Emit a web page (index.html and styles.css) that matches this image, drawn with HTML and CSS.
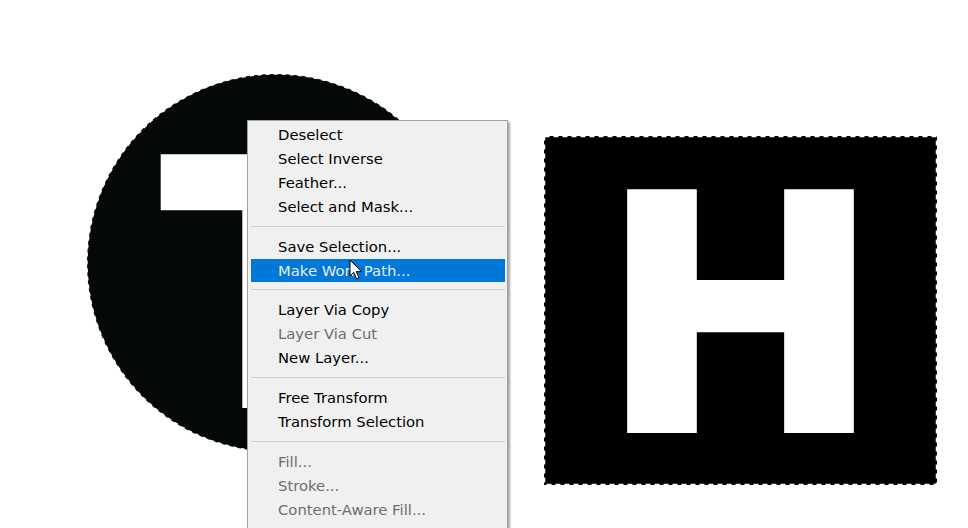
FILE: index.html
```html
<!DOCTYPE html>
<html>
<head>
<meta charset="utf-8">
<link rel="stylesheet" href="styles.css">
</head>
<body>
<div class="stage">
  <svg class="art" width="968" height="528" viewBox="0 0 968 528">
    <circle cx="276" cy="263" r="189" fill="#040806"/>
    <circle cx="276" cy="263" r="189" fill="none" stroke="#ffffff" stroke-width="1.5" stroke-dasharray="4 4"/>
    <text class="glyph glyph-t" x="278" y="404" font-size="337" text-anchor="middle">T</text>
    <rect x="544" y="136" width="393" height="349" fill="#000000"/>
    <rect x="544.5" y="136.5" width="392" height="348" fill="none" stroke="#ffffff" stroke-width="1.5" stroke-dasharray="5 4"/>
    <text class="glyph glyph-h" x="740.5" y="430" font-size="326" text-anchor="middle" transform="translate(740.5 0) scale(1.035 1) translate(-740.5 0)">H</text>
  </svg>

  <div class="menu">
    <div class="item">Deselect</div>
    <div class="item">Select Inverse</div>
    <div class="item">Feather...</div>
    <div class="item">Select and Mask...</div>
    <div class="sep"></div>
    <div class="item">Save Selection...</div>
    <div class="item active">Make Work Path...</div>
    <div class="sep"></div>
    <div class="item">Layer Via Copy</div>
    <div class="item disabled">Layer Via Cut</div>
    <div class="item">New Layer...</div>
    <div class="sep"></div>
    <div class="item">Free Transform</div>
    <div class="item">Transform Selection</div>
    <div class="sep"></div>
    <div class="item disabled">Fill...</div>
    <div class="item disabled">Stroke...</div>
    <div class="item disabled">Content-Aware Fill...</div>
    <div class="item disabled">Generative Fill...</div>
  </div>

  <svg class="cursor" width="14" height="22" viewBox="0 0 14 22">
    <path d="M1 1 L1 17 L4.8 13.4 L7.6 19.8 L10 18.8 L7.3 12.6 L12.4 12.6 Z" fill="#ffffff" stroke="#000000" stroke-width="1" stroke-linejoin="miter"/>
  </svg>
</div>
</body>
</html>
```

FILE: styles.css
```css
html, body {
  margin: 0;
  padding: 0;
  background: #ffffff;
}

.stage {
  position: relative;
  width: 968px;
  height: 528px;
  overflow: hidden;
  background: #ffffff;
}

.art {
  display: block;
}

.glyph {
  font-family: "DejaVu Sans", sans-serif;
  font-weight: bold;
  fill: #ffffff;
  stroke: #ffffff;
  stroke-linejoin: miter;
}

.glyph-h {
  stroke-width: 6px;
}

.glyph-t {
  stroke-width: 8px;
}

.menu {
  position: absolute;
  left: 247px;
  top: 120px;
  width: 254px;
  padding: 2px 2px 2px 3px;
  background: #f0f0f0;
  border: 1px solid #a0a0a0;
  box-shadow: 2px 2px 2px rgba(0, 0, 0, 0.35);
  font-family: "DejaVu Sans", sans-serif;
  font-size: 14.8px;
  color: #000000;
}

.item {
  height: 24px;
  line-height: 24px;
  padding-left: 27px;
  white-space: nowrap;
}

.item.active {
  background: #0078d7;
  color: #e8eef6;
  height: 23px;
  line-height: 23px;
  margin-bottom: 1px;
}

.item.disabled {
  color: #6d6d6d;
}

.sep {
  height: 1px;
  margin: 7px 0 8px 0;
  background: #cfcfcf;
}

.cursor {
  position: absolute;
  left: 349px;
  top: 259px;
}
```
